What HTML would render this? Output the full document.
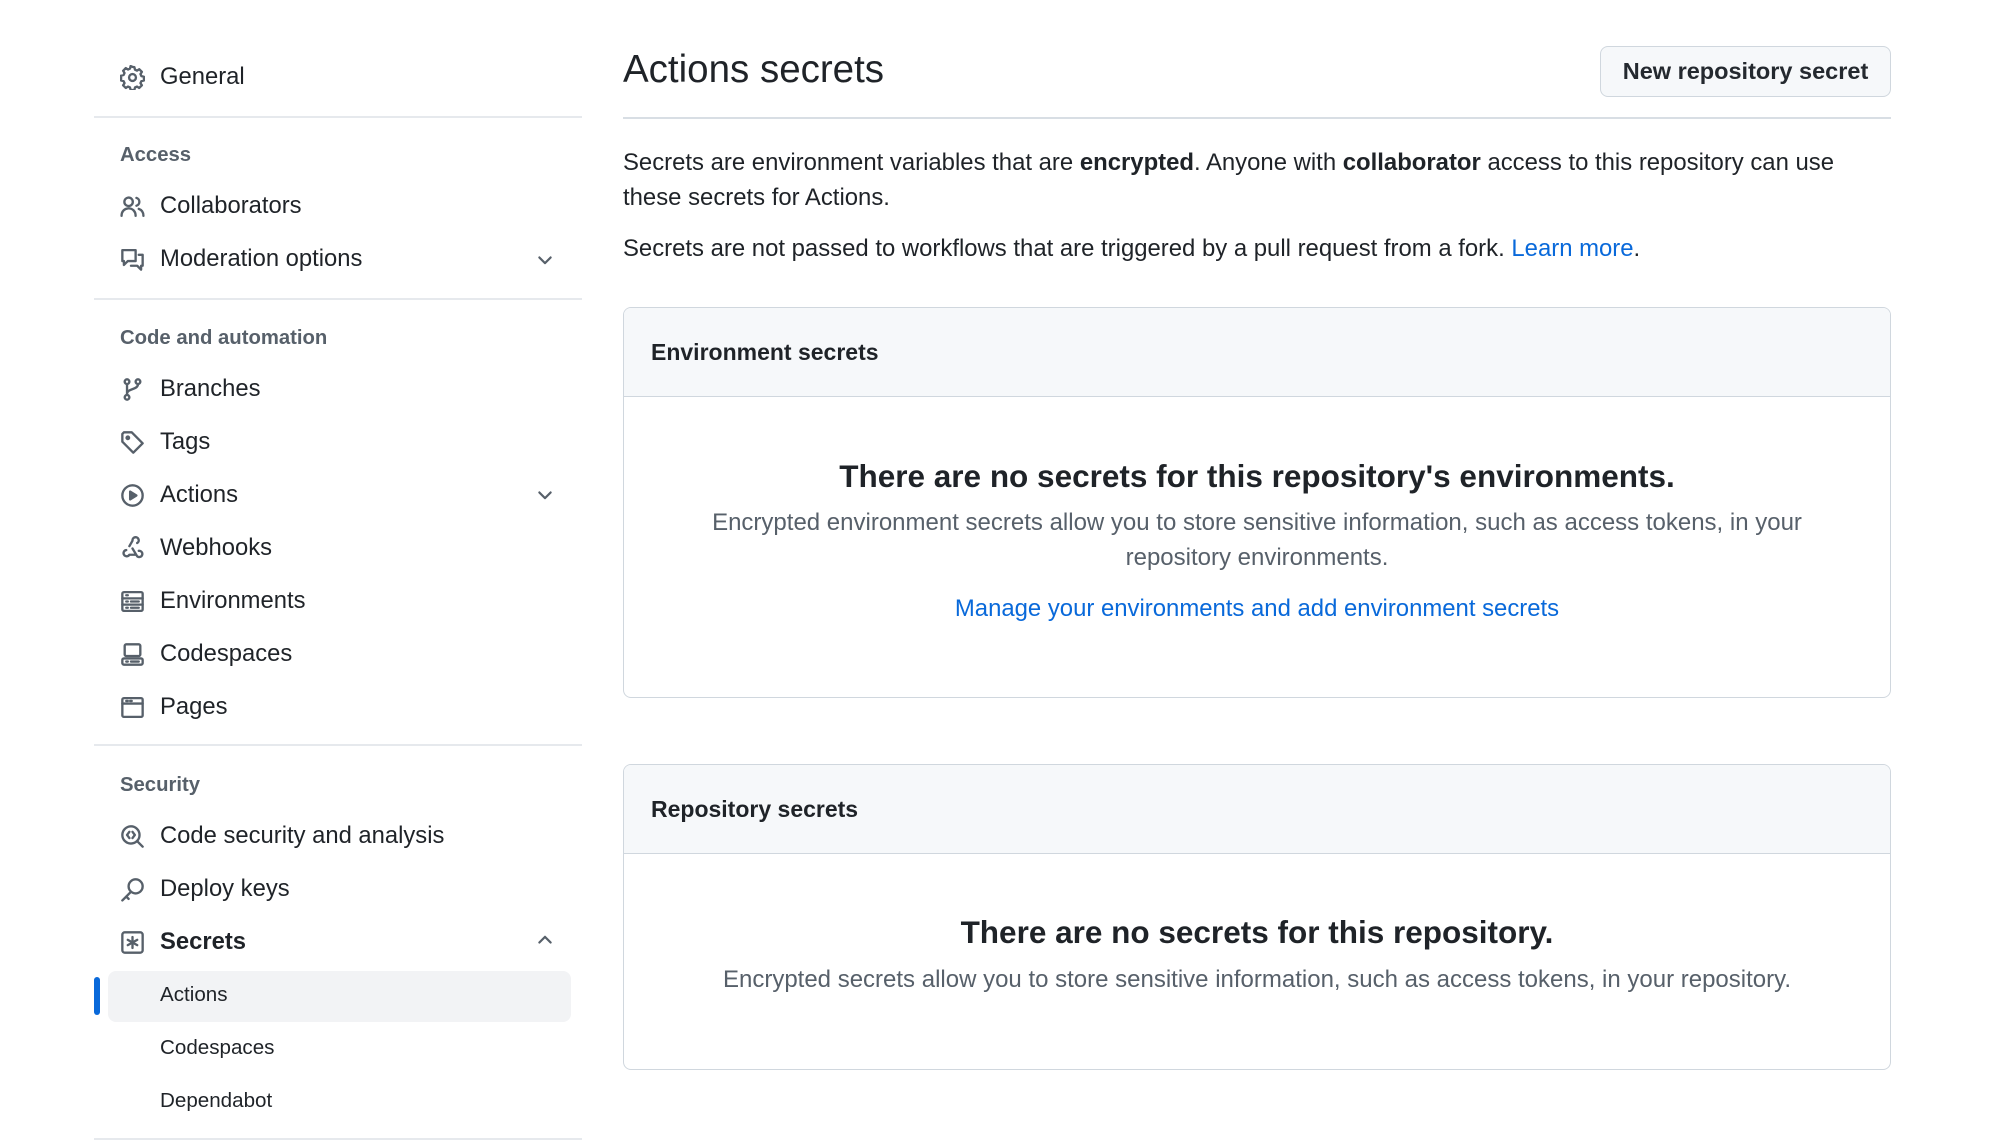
<!DOCTYPE html>
<html><head><meta charset="utf-8"><style>
*{margin:0;padding:0;box-sizing:border-box}
body{width:1999px;height:1141px;background:#fff;font-family:"Liberation Sans",Arial,sans-serif;color:#1f2328;position:relative;overflow:hidden}
.a{position:absolute;white-space:nowrap}
.it{position:absolute;left:120px;height:40px;line-height:40px;font-size:23.8px;color:#1f2328;white-space:nowrap}
.it svg{position:absolute;left:0;top:8px;width:25px;height:25px;fill:none;stroke:#57606a;stroke-width:1.5;stroke-linecap:round;stroke-linejoin:round}
.it span{position:absolute;left:40px;top:0;white-space:nowrap}
.lab{position:absolute;left:120px;font-size:20.3px;font-weight:bold;color:#57606a;height:30px;line-height:30px;white-space:nowrap}
.hr{position:absolute;left:94px;width:488px;height:2px;background:#e6e9ed}
.chev{position:absolute;left:535px;width:20px;height:20px;fill:none;stroke:#57606a;stroke-width:1.8;stroke-linecap:round;stroke-linejoin:round}
.sub{position:absolute;left:160px;font-size:20.6px;height:40px;line-height:40px;color:#1f2328;white-space:nowrap}
.box{position:absolute;left:623px;width:1268px;border:1.5px solid #d0d7de;border-radius:8px;overflow:hidden}
.bh{background:#f6f8fa;border-bottom:1.5px solid #d0d7de;font-weight:bold;font-size:23px;padding-left:27px}
.c{position:absolute;left:0;width:100%;text-align:center;white-space:nowrap}
</style></head><body>

<div class="it" style="top:57px"><svg viewBox="0 0 16 16"><circle cx="8" cy="8" r="2.2"/><path d="M8 1.2l1.2.2.4 1.6 1.3.6 1.4-.9 1.7 1.7-.9 1.4.6 1.3 1.6.4v2.4l-1.6.4-.6 1.3.9 1.4-1.7 1.7-1.4-.9-1.3.6-.4 1.6H6.8l-.4-1.6-1.3-.6-1.4.9-1.7-1.7.9-1.4-.6-1.3-1.6-.4V6.8l1.6-.4.6-1.3-.9-1.4 1.7-1.7 1.4.9 1.3-.6.4-1.6z"/></svg><span>General</span></div>
<div class="hr" style="top:116px"></div>
<div class="lab" style="top:140px">Access</div>
<div class="it" style="top:186px"><svg viewBox="0 0 16 16"><circle cx="5.5" cy="5" r="2.7"/><path d="M1 14c0-3 2-4.8 4.5-4.8S10 11 10 14M10.5 2.5a2.6 2.6 0 010 5M12 9.5c1.8.6 3 2.2 3 4.5"/></svg><span>Collaborators</span></div>
<div class="it" style="top:239px"><svg viewBox="0 0 16 16"><path d="M1.5 2h8.5v7H5l-2.5 2.5V9h-1zM12 5h2.5v7h-1v2.5L11 12H7"/></svg><span>Moderation options</span></div>
<svg class="chev" style="top:250px" viewBox="0 0 16 16"><path d="M3.5 6l4.5 4.5L12.5 6"/></svg>
<div class="hr" style="top:298px"></div>
<div class="lab" style="top:323px">Code and automation</div>
<div class="it" style="top:369px"><svg viewBox="0 0 16 16"><circle cx="4.5" cy="3" r="1.5"/><circle cx="4.5" cy="13" r="1.5"/><circle cx="11.5" cy="3" r="1.5"/><path d="M4.5 4.5v7M11.5 4.5c0 4-7 2.5-7 6.5"/></svg><span>Branches</span></div>
<div class="it" style="top:422px"><svg viewBox="0 0 16 16"><path d="M1.5 2.5v5l7 7 6-6-7-7h-5z"/><circle cx="5" cy="5" r=".8"/></svg><span>Tags</span></div>
<div class="it" style="top:475px"><svg viewBox="0 0 16 16"><circle cx="8" cy="8" r="6.5"/><path d="M6.5 5.5v5l4-2.5z" fill="#57606a"/></svg><span>Actions</span></div>
<svg class="chev" style="top:485px" viewBox="0 0 16 16"><path d="M3.5 6l4.5 4.5L12.5 6"/></svg>
<div class="it" style="top:528px"><svg viewBox="0 0 16 16"><path d="M6 6.5L8 3a2 2 0 113 1.5M4 9a2 2 0 102 3h4M12 9.5a2 2 0 11-1 3.5L8 8"/></svg><span>Webhooks</span></div>
<div class="it" style="top:581px"><svg viewBox="0 0 16 16"><rect x="1.5" y="2" width="13" height="12" rx="1"/><path d="M1.5 6h13M1.5 10h13M4 4h1M4 8h1M4 12h1M7 8h5M7 12h5"/></svg><span>Environments</span></div>
<div class="it" style="top:634px"><svg viewBox="0 0 16 16"><rect x="3" y="1.5" width="10" height="7.5" rx="1"/><rect x="1.5" y="10.5" width="13" height="4" rx="1"/><path d="M4 12.5h1M7 12.5h5"/></svg><span>Codespaces</span></div>
<div class="it" style="top:687px"><svg viewBox="0 0 16 16"><rect x="1.5" y="2" width="13" height="12" rx="1"/><path d="M1.5 5.5h13M4 3.8h1M6.5 3.8h1"/></svg><span>Pages</span></div>
<div class="hr" style="top:744px"></div>
<div class="lab" style="top:770px">Security</div>
<div class="it" style="top:816px"><svg viewBox="0 0 16 16"><circle cx="7" cy="7" r="5.5"/><path d="M11 11l3.5 3.5M6 5L4.5 7 6 9M8 5l1.5 2L8 9"/></svg><span>Code security and analysis</span></div>
<div class="it" style="top:869px"><svg viewBox="0 0 16 16"><circle cx="10" cy="6" r="4.5"/><path d="M7 9.5l-5.5 5.5M4 12.5l1.5 1.5"/></svg><span>Deploy keys</span></div>
<div class="it" style="top:922px;font-weight:bold"><svg viewBox="0 0 16 16"><rect x="1.5" y="1.5" width="13" height="13" rx="1.5"/><path d="M8 4.5v7M5 6.3l6 3.4M11 6.3L5 9.7"/></svg><span>Secrets</span></div>
<svg class="chev" style="top:930px" viewBox="0 0 16 16"><path d="M3.5 10l4.5-4.5L12.5 10"/></svg>
<div class="a" style="left:94px;top:977px;width:6px;height:38px;border-radius:3px;background:#0969da"></div>
<div class="a" style="left:108px;top:971px;width:463px;height:51px;border-radius:8px;background:#f2f3f5"></div>
<div class="sub" style="top:975px">Actions</div>
<div class="sub" style="top:1028px">Codespaces</div>
<div class="sub" style="top:1081px">Dependabot</div>
<div class="hr" style="top:1138px"></div>

<div class="a" style="left:623px;top:46px;font-size:38.5px;line-height:48px">Actions secrets</div>
<div class="a" style="left:1600px;top:46px;width:291px;height:51px;border:1.5px solid #d0d7de;border-radius:8px;background:#f6f8fa;text-align:center;line-height:48px;font-size:23.5px;font-weight:bold;color:#24292f">New repository secret</div>
<div class="a" style="left:623px;top:117px;width:1268px;height:2px;background:#d8dee4"></div>
<div class="a" style="left:623px;top:146px;font-size:23.9px;line-height:34.5px">Secrets are environment variables that are <b>encrypted</b>. Anyone with <b>collaborator</b> access to this repository can use<br>these secrets for Actions.</div>
<div class="a" style="left:623px;top:232px;font-size:23.9px;line-height:34.5px">Secrets are not passed to workflows that are triggered by a pull request from a fork. <span style="color:#0969da">Learn more</span>.</div>

<div class="box" style="top:307px;height:391px">
 <div class="bh" style="height:89px;line-height:88px">Environment secrets</div>
 <div class="c" style="top:148px;font-size:31.5px;font-weight:bold;line-height:40px">There are no secrets for this repository's environments.</div>
 <div class="c" style="top:197px;font-size:24px;line-height:35px;color:#57606a">Encrypted environment secrets allow you to store sensitive information, such as access tokens, in your<br>repository environments.</div>
 <div class="c" style="top:283px;font-size:23.9px;line-height:35px;color:#0969da">Manage your environments and add environment secrets</div>
</div>

<div class="box" style="top:764px;height:306px">
 <div class="bh" style="height:89px;line-height:88px">Repository secrets</div>
 <div class="c" style="top:147px;font-size:31.5px;font-weight:bold;line-height:40px">There are no secrets for this repository.</div>
 <div class="c" style="top:197px;font-size:24px;line-height:35px;color:#57606a">Encrypted secrets allow you to store sensitive information, such as access tokens, in your repository.</div>
</div>
</body></html>
